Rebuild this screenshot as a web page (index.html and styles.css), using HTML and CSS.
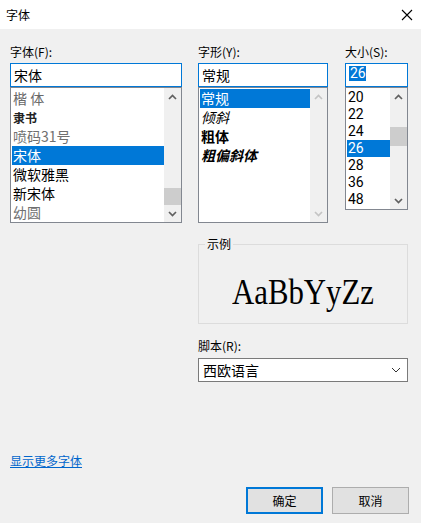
FILE: index.html
```html
<!DOCTYPE html>
<html lang="zh-CN">

<head>
    <meta charset="UTF-8">
    <meta name="viewport" content="width=device-width, initial-scale=1.0">
    <title>字体</title>
    <link rel="stylesheet" href="styles.css">
</head>

<body>
    <div class="dialog">
        <div class="titlebar">
            <span class="title">字体</span>
            <button class="close" aria-label="关闭">
                <svg width="12" height="12" viewBox="0 0 12 12"><path d="M1 1L11 11M11 1L1 11" stroke="#000" stroke-width="1.1" fill="none"/></svg>
            </button>
        </div>

        <div class="content">
            <div class="pickers">
                <!-- Font family -->
                <div class="picker">
                    <div class="caption">字体(F):</div>
                    <div class="field">宋体</div>
                    <div class="listbox tall">
                        <ul class="items">
                            <li class="kai">楷 体</li>
                            <li class="li-shu">隶书</li>
                            <li class="dim">喷码31号</li>
                            <li class="selected">宋体</li>
                            <li>微软雅黑</li>
                            <li>新宋体</li>
                            <li class="dim">幼圆</li>
                        </ul>
                        <div class="scrollbar">
                            <div class="arrow"><svg width="9" height="6" viewBox="0 0 9 6"><polyline points="1,5 4.5,1.5 8,5" fill="none" stroke="#606060" stroke-width="1.7"/></svg></div>
                            <div class="track"><div class="thumb family-thumb"></div></div>
                            <div class="arrow"><svg width="9" height="6" viewBox="0 0 9 6"><polyline points="1,1 4.5,4.5 8,1" fill="none" stroke="#606060" stroke-width="1.7"/></svg></div>
                        </div>
                    </div>
                </div>

                <!-- Font style -->
                <div class="picker">
                    <div class="caption">字形(Y):</div>
                    <div class="field">常规</div>
                    <div class="listbox tall">
                        <ul class="items">
                            <li class="selected">常规</li>
                            <li class="italic">倾斜</li>
                            <li class="bold">粗体</li>
                            <li class="bold italic">粗偏斜体</li>
                        </ul>
                        <div class="scrollbar">
                            <div class="arrow"><svg width="9" height="6" viewBox="0 0 9 6"><polyline points="1,5 4.5,1.5 8,5" fill="none" stroke="#c4c4c4" stroke-width="1.7"/></svg></div>
                            <div class="track"></div>
                            <div class="arrow"><svg width="9" height="6" viewBox="0 0 9 6"><polyline points="1,1 4.5,4.5 8,1" fill="none" stroke="#c4c4c4" stroke-width="1.7"/></svg></div>
                        </div>
                    </div>
                </div>

                <!-- Font size -->
                <div class="picker size">
                    <div class="caption">大小(S):</div>
                    <div class="field"><span class="text-selection">26</span></div>
                    <div class="listbox short">
                        <ul class="items numbers">
                            <li>20</li>
                            <li>22</li>
                            <li>24</li>
                            <li class="selected">26</li>
                            <li>28</li>
                            <li>36</li>
                            <li>48</li>
                        </ul>
                        <div class="scrollbar narrow">
                            <div class="arrow"><svg width="9" height="6" viewBox="0 0 9 6"><polyline points="1,5 4.5,1.5 8,5" fill="none" stroke="#606060" stroke-width="1.7"/></svg></div>
                            <div class="track"><div class="thumb size-thumb"></div></div>
                            <div class="arrow"><svg width="9" height="6" viewBox="0 0 9 6"><polyline points="1,1 4.5,4.5 8,1" fill="none" stroke="#606060" stroke-width="1.7"/></svg></div>
                        </div>
                    </div>
                </div>

                <div class="preview-area">
                    <fieldset class="sample">
                        <legend>示例</legend>
                        <div class="sample-line"><span class="sample-text">AaBbYyZz</span></div>
                    </fieldset>

                    <div class="caption script-caption">脚本(R):</div>
                    <div class="combo">
                        <span>西欧语言</span>
                        <svg width="10" height="6" viewBox="0 0 10 6"><polyline points="1,1 5,5 9,1" fill="none" stroke="#333" stroke-width="1"/></svg>
                    </div>
                </div>
            </div>

            <div class="more-fonts"><a href="#">显示更多字体</a></div>

            <div class="buttons">
                <button class="btn default">确定</button>
                <button class="btn">取消</button>
            </div>
        </div>
    </div>
</body>

</html>
```

FILE: styles.css
```css
/* Base */
* {
    box-sizing: border-box;
}

body {
    margin: 0;
    background: #f0f0f0;
    font-family: "Noto Sans CJK SC", "Noto Sans", sans-serif;
    font-size: 12px;
    color: #000;
}

.dialog {
    width: 421px;
    height: 523px;
    background: #f0f0f0;
}

/* Title bar */
.titlebar {
    height: 29px;
    background: #fff;
    display: flex;
    align-items: center;
    justify-content: space-between;
    padding: 0 8px 0 6px;
}

.title {
    line-height: 16px;
}

.close {
    border: none;
    background: none;
    padding: 0;
    width: 12px;
    height: 12px;
    display: flex;
}

/* Main area */
.content {
    padding: 15px 12px 0 10px;
}

.pickers {
    display: grid;
    grid-template-columns: 172px 130px 64px;
    column-gap: 16px;
}

.size {
    margin-left: 1px;
}

.caption {
    line-height: 16px;
    margin-bottom: 3px;
}

.field {
    height: 24px;
    border: 1px solid #0078d7;
    background: #fff;
    font-size: 14px;
    line-height: 22px;
    padding-left: 3px;
    white-space: nowrap;
}

.text-selection {
    display: inline-block;
    vertical-align: top;
    margin-top: 2px;
    background: #0078d7;
    color: #fff;
    font-family: Roboto, "Noto Sans", sans-serif;
    line-height: 15px;
    padding: 0 0 0 1px;
}

/* List boxes */
.listbox {
    display: flex;
    border: 1px solid #828790;
    background: #fff;
}

.listbox.tall {
    height: 136px;
}

.listbox.short {
    height: 123px;
}

.items {
    list-style: none;
    margin: 0;
    padding: 1px 0 0 1px;
    flex: 1;
    overflow: hidden;
}

.items li {
    height: 19px;
    line-height: 19px;
    font-size: 14px;
    padding-left: 1px;
    white-space: nowrap;
}

.items.numbers li {
    height: 17px;
    line-height: 17px;
    font-family: Roboto, "Noto Sans", sans-serif;
}

.items li.selected {
    background: #0078d7;
    color: #fff;
}

.kai {
    color: #6a6a6a;
}

.li-shu {
    font-size: 12px !important;
    font-weight: 700;
    color: #222;
}

.dim {
    color: #707070;
}

.italic {
    font-style: italic;
}

.bold {
    font-weight: 700;
}

/* Scroll bars */
.scrollbar {
    width: 17px;
    background: #f0f0f0;
    display: flex;
    flex-direction: column;
}

.arrow {
    height: 17px;
    display: flex;
    align-items: center;
    justify-content: center;
}

.track {
    flex: 1;
    display: flex;
    flex-direction: column;
}

.thumb {
    background: #cdcdcd;
}

.family-thumb {
    margin-top: auto;
    height: 17px;
}

.size-thumb {
    margin-top: 22px;
    height: 19px;
}

/* Sample and script */
.preview-area {
    grid-column: 2 / 4;
}

.sample {
    margin: 13px 0 0;
    padding: 20px 0 11px;
    border: 1px solid #dcdcdc;
    min-width: 0;
    text-align: left;
}

.sample legend {
    margin-left: 6px;
    padding: 0 2px;
    line-height: 16px;
    font-size: 12px;
}

.sample-line {
    line-height: 40px;
    height: 40px;
    text-align: center;
}

.sample-text {
    display: inline-block;
    font-family: "Liberation Serif", serif;
    font-size: 36px;
    transform: scaleX(0.855);
}

.script-caption {
    margin-top: 14px;
    margin-bottom: 4px;
}

.combo {
    height: 24px;
    border: 1px solid #7a7a7a;
    background: #fff;
    display: flex;
    align-items: center;
    justify-content: space-between;
    padding: 0 6px 0 4px;
    font-size: 14px;
}

/* Footer */
.more-fonts {
    margin-top: 71px;
    line-height: 16px;
}

.more-fonts a {
    color: #0066cc;
    text-decoration: underline;
}

.buttons {
    margin-top: 18px;
    display: flex;
    justify-content: flex-end;
    gap: 9px;
}

.btn {
    width: 77px;
    height: 27px;
    background: #e1e1e1;
    border: 1px solid #adadad;
    font-family: inherit;
    font-size: 12px;
    padding: 0;
}

.btn.default {
    border: 2px solid #0078d7;
}
```
